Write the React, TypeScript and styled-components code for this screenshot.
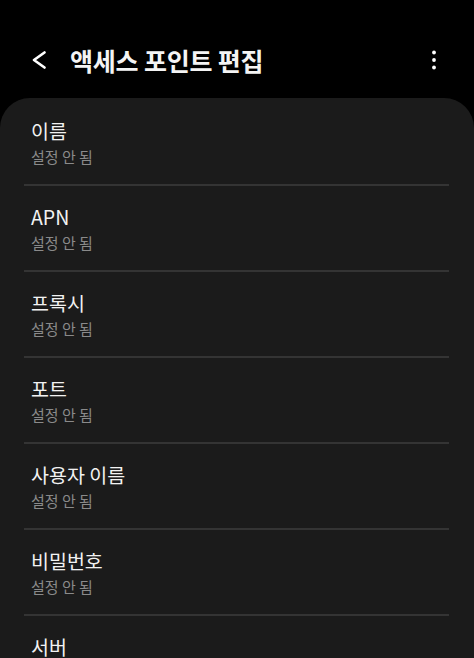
import React from "react";
import styled, { createGlobalStyle } from "styled-components";

const GlobalStyle = createGlobalStyle`
  html, body {
    margin: 0;
    padding: 0;
    background: #000;
    overflow: hidden;
  }
  body {
    font-family: "Noto Sans CJK KR", "Noto Sans", sans-serif;
    -webkit-font-smoothing: antialiased;
  }
`;

const Screen = styled.div`
  width: 474px;
  height: 658px;
  background: #000;
  overflow: hidden;
  display: flex;
  flex-direction: column;
`;

const Header = styled.header`
  flex-shrink: 0;
  height: 98px;
  display: flex;
  align-items: flex-start;
  padding-top: 38px;
  box-sizing: border-box;
`;

const HeaderRow = styled.div`
  height: 44px;
  width: 100%;
  display: flex;
  align-items: center;
`;

const IconButton = styled.button<{ $w: number }>`
  background: none;
  border: none;
  padding: 0;
  display: flex;
  align-items: center;
  justify-content: center;
  color: #fff;
  width: ${(p) => p.$w}px;
  height: 44px;
`;

const BackWrap = styled.div`
  width: 70px;
  padding-left: 31px;
  box-sizing: border-box;
  display: flex;
  align-items: center;
`;

const Title = styled.h1`
  margin: 0;
  flex: 1;
  color: #f4f4f4;
  font-size: 25px;
  font-weight: 700;
  line-height: 44px;
  letter-spacing: -0.2px;
  white-space: nowrap;
`;

const MenuWrap = styled.div`
  width: 30px;
  padding-right: 25px;
  display: flex;
  justify-content: center;
`;

const Card = styled.section`
  flex: 1;
  min-height: 0;
  overflow: hidden;
  background: #1b1b1b;
  border-radius: 30px 30px 0 0;
  padding-top: 2px;
`;

const Row = styled.div`
  height: 84px;
  box-sizing: border-box;
  padding: 18px 31px 0 31px;
  display: flex;
  flex-direction: column;
`;

const RowTitle = styled.div`
  color: #f2f2f2;
  font-size: 19.5px;
  line-height: 26px;
  font-weight: 400;
  white-space: nowrap;
`;

const RowSub = styled.div`
  margin-top: 3px;
  color: #8a8a8a;
  font-size: 15px;
  line-height: 20px;
  white-space: nowrap;
`;

const Divider = styled.div`
  height: 2px;
  margin: 0 25px 0 24px;
  background: #343434;
`;

const items = ["이름", "APN", "프록시", "포트", "사용자 이름", "비밀번호", "서버"];

export default function App() {
  return (
    <>
      <GlobalStyle />
      <Screen>
        <Header>
          <HeaderRow>
            <BackWrap>
              <IconButton $w={16} aria-label="뒤로">
                <svg width="16" height="20" viewBox="0 0 16 20" fill="none">
                  <path
                    d="M13.5 2.5 L3 10 L13.5 17.5"
                    stroke="#fff"
                    strokeWidth="2.7"
                    strokeLinecap="round"
                    strokeLinejoin="round"
                  />
                </svg>
              </IconButton>
            </BackWrap>
            <Title>액세스 포인트 편집</Title>
            <MenuWrap>
              <IconButton $w={10} aria-label="더보기">
                <svg width="6" height="22" viewBox="0 0 6 22">
                  <circle cx="3" cy="3.5" r="1.9" fill="#fff" />
                  <circle cx="3" cy="11" r="1.9" fill="#fff" />
                  <circle cx="3" cy="18.5" r="1.9" fill="#fff" />
                </svg>
              </IconButton>
            </MenuWrap>
          </HeaderRow>
        </Header>
        <Card>
          {items.map((label, i) => (
            <React.Fragment key={label}>
              {i > 0 && <Divider />}
              <Row>
                <RowTitle>{label}</RowTitle>
                <RowSub>설정 안 됨</RowSub>
              </Row>
            </React.Fragment>
          ))}
        </Card>
      </Screen>
    </>
  );
}
